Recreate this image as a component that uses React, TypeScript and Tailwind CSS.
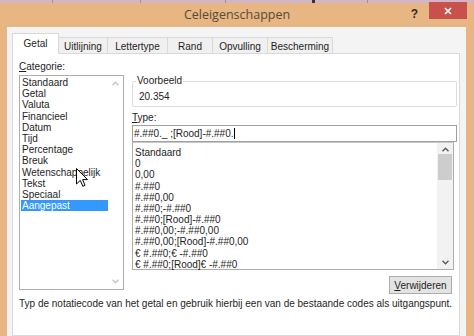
import React from "react";

const cats = [
  "Standaard",
  "Getal",
  "Valuta",
  "Financieel",
  "Datum",
  "Tijd",
  "Percentage",
  "Breuk",
  "Wetenschappelijk",
  "Tekst",
  "Speciaal",
  "Aangepast",
];

const types = [
  "Standaard",
  "0",
  "0,00",
  "#.##0",
  "#.##0,00",
  "#.##0;-#.##0",
  "#.##0;[Rood]-#.##0",
  "#.##0,00;-#.##0,00",
  "#.##0,00;[Rood]-#.##0,00",
  "€ #.##0;€ -#.##0",
  "€ #.##0;[Rood]€ -#.##0",
];

function ChevUp({ color }: { color: string }) {
  return (
    <svg width="7" height="5" viewBox="0 0 7 5">
      <path d="M0.5 4.2 L3.5 1.2 L6.5 4.2" fill="none" stroke={color} strokeWidth="1.4" />
    </svg>
  );
}
function ChevDown({ color }: { color: string }) {
  return (
    <svg width="7" height="5" viewBox="0 0 7 5">
      <path d="M0.5 0.8 L3.5 3.8 L6.5 0.8" fill="none" stroke={color} strokeWidth="1.4" />
    </svg>
  );
}

export default function App() {
  return (
    <div className="relative w-[474px] h-[336px] overflow-hidden bg-[#e8b682] flex flex-col font-['Liberation_Sans',Arial,sans-serif] text-[10px] text-[#1e1e1e]">
      {/* strip of the window behind */}
      <div className="h-[3px] bg-[#d2b6c8] flex shrink-0">
        <div className="w-[52px]" />
        <div className="w-[1px] bg-[#a48fa0]" />
        <div className="w-[87px]" />
        <div className="w-[1px] bg-[#a48fa0]" />
        <div className="w-[84px]" />
        <div className="w-[1px] bg-[#a48fa0]" />
        <div className="w-[86px]" />
        <div className="w-[3px] bg-[#3a2f36]" />
        <div className="w-[52px]" />
        <div className="w-[1px] bg-[#a48fa0]" />
      </div>

      {/* title bar */}
      <div className="h-[24px] shrink-0 grid grid-cols-[1fr_auto_1fr] items-start">
        <div />
        <div className="pt-[3px] text-[12.5px] leading-[18px] text-[#57493d] font-['Open_Sans',sans-serif]">
          Celeigenschappen
        </div>
        <div className="flex justify-end items-start mr-[7px]">
          <span className="mt-[2px] mr-[11px] text-[12px] font-bold text-[#2e2a26] font-['Liberation_Sans',sans-serif]">?</span>
          <div className="-mt-[1px] w-[38px] h-[17px] bg-[#c8514b] flex items-center justify-center">
            <svg width="8" height="8" viewBox="0 0 8 8">
              <path d="M1 1 L7 7 M7 1 L1 7" stroke="#ffffff" strokeWidth="1.6" />
            </svg>
          </div>
        </div>
      </div>

      {/* dialog client */}
      <div className="flex-1 ml-[7px] mr-[8px] bg-[#f4f4f4] pl-[5px] pr-[6px] pt-[6px] flex flex-col">
        {/* tabs */}
        <div className="flex items-end h-[20px] relative z-10">
          <div className="w-[47px] h-[21px] -mb-[1px] bg-white border border-b-0 border-[#d9d9d9] flex items-center justify-center pb-[2px]">
            Getal
          </div>
          <div className="w-[49px] h-[16px] bg-[#f0f0f0] border-t border-r border-[#d9d9d9] flex items-center justify-center pt-[1px]">
            Uitlijning
          </div>
          <div className="w-[60px] h-[16px] bg-[#f0f0f0] border-t border-r border-[#d9d9d9] flex items-center justify-center pt-[1px]">
            Lettertype
          </div>
          <div className="w-[45px] h-[16px] bg-[#f0f0f0] border-t border-r border-[#d9d9d9] flex items-center justify-center pt-[1px]">
            Rand
          </div>
          <div className="w-[55px] h-[16px] bg-[#f0f0f0] border-t border-r border-[#d9d9d9] flex items-center justify-center pt-[1px]">
            Opvulling
          </div>
          <div className="w-[65px] h-[16px] bg-[#f0f0f0] border-t border-r border-[#d9d9d9] flex items-center justify-center pt-[1px]">
            Bescherming
          </div>
        </div>

        {/* panel */}
        <div className="flex-1 bg-white border border-[#d9d9d9] pl-[6px] pr-[2px] pt-[7px] flex flex-col">
          <div className="flex items-start gap-[8px]">
            {/* left column */}
            <div className="w-[105px] flex flex-col">
              <div className="h-[14px] leading-[12px]">
                <span className="underline">C</span>ategorie:
              </div>
              <div className="h-[215px] border border-[#adadad] flex">
                <div className="flex-1 pt-[1px] pl-[1px]">
                  {cats.map((c) => (
                    <div
                      key={c}
                      className={
                        c === "Aangepast"
                          ? "leading-[11.2px] pl-[1px] bg-[#3399ff] text-white"
                          : "leading-[11.2px] pl-[1px]"
                      }
                    >
                      {c}
                    </div>
                  ))}
                </div>
                <div className="w-[15px] flex flex-col items-center justify-between pt-[5px] pb-[5px]">
                  <ChevUp color="#c4c4c4" />
                  <ChevDown color="#c4c4c4" />
                </div>
              </div>
            </div>

            {/* right column */}
            <div className="flex-1 pt-[14px] flex flex-col">
              <fieldset className="border border-[#dcdcdc] rounded-[2px] h-[32px]">
                <legend className="ml-[3px] px-[1px] leading-[12px]">Voorbeeld</legend>
                <div className="pl-[6px] pt-[4px] leading-[12px]">20.354</div>
              </fieldset>
              <div className="mt-[5px] leading-[12px]">
                <span className="underline">T</span>ype:
              </div>
              <div className="mt-[1px] h-[17px] border border-[#a0a0a0] flex items-center pl-[1px]">
                <span>#.##0._ ;[Rood]-#.##0.</span>
                <span className="w-[1px] h-[11px] bg-black" />
              </div>
              <div className="mr-[3px] h-[128px] border border-[#adadad] border-t-[#c8c8c8] flex">
                <div className="flex-1 pt-[4px] pl-[2px]">
                  {types.map((t) => (
                    <div key={t} className="leading-[11.17px] whitespace-nowrap">
                      {t}
                    </div>
                  ))}
                </div>
                <div className="w-[16px] bg-[#f2f2f2] flex flex-col items-center pt-[4px] pb-[4px]">
                  <ChevUp color="#5a5a5a" />
                  <div className="mt-[2px] w-[14px] h-[26px] bg-[#cdcdcd]" />
                  <div className="flex-1" />
                  <ChevDown color="#5a5a5a" />
                </div>
              </div>
              <div className="flex justify-end mt-[6px] mr-[5px]">
                <div className="w-[63px] h-[18px] bg-[#e3e3e3] border border-[#adadad] flex items-center justify-center">
                  <span>
                    <span className="underline">V</span>erwijderen
                  </span>
                </div>
              </div>
            </div>
          </div>
          <div className="mt-[4px] leading-[12px] whitespace-nowrap">
            Typ de notatiecode van het getal en gebruik hierbij een van de bestaande codes als uitgangspunt.
          </div>
        </div>
      </div>

      {/* mouse cursor */}
      <svg
        className="absolute left-[76px] top-[168px]"
        width="13"
        height="20"
        viewBox="0 0 13 20"
      >
        <path
          d="M0.5 0.5 L0.5 16 L4.3 12.4 L6.8 18.3 L9 17.3 L6.6 11.6 L11.5 11.6 Z"
          fill="#ffffff"
          stroke="#000000"
          strokeWidth="1"
          strokeLinejoin="round"
        />
      </svg>
    </div>
  );
}
